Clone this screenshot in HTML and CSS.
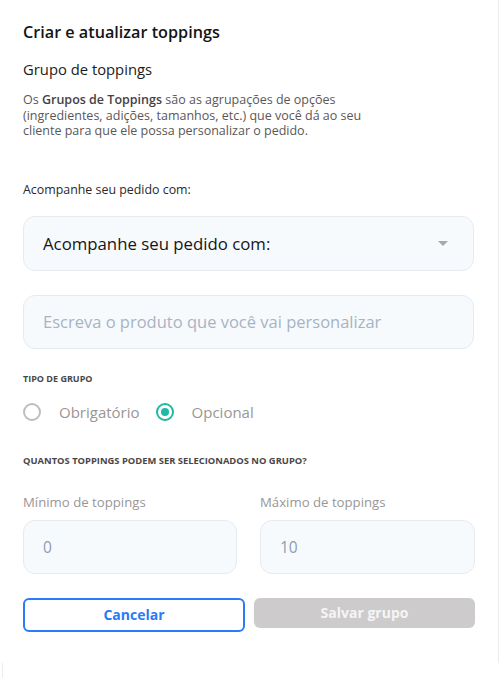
FILE: index.html
```html
<!DOCTYPE html>
<html lang="pt-BR">
<head>
    <meta charset="UTF-8">
    <meta name="viewport" content="width=device-width, initial-scale=1.0">
    <title>Criar e atualizar toppings</title>
    <link rel="stylesheet" href="styles.css">
</head>
<body>
    <div class="panel">
        <h1 class="title">Criar e atualizar toppings</h1>
        <h2 class="subtitle">Grupo de toppings</h2>
        <p class="intro">
            Os <strong>Grupos de Toppings</strong> são as agrupações de opções<br>
            (ingredientes, adições, tamanhos, etc.) que você dá ao seu<br>
            cliente para que ele possa personalizar o pedido.
        </p>

        <label class="field-label" for="accompany">Acompanhe seu pedido com:</label>
        <div class="select-box" id="accompany">
            <span>Acompanhe seu pedido com:</span>
            <span class="caret"></span>
        </div>

        <input type="text" class="input-field product-input" placeholder="Escreva o produto que você vai personalizar">

        <div class="section-label type-label">TIPO DE GRUPO</div>
        <div class="radio-row">
            <label class="radio">
                <span class="radio-dot"></span>
                <span>Obrigatório</span>
            </label>
            <label class="radio checked">
                <span class="radio-dot"></span>
                <span>Opcional</span>
            </label>
        </div>

        <div class="section-label count-label">QUANTOS TOPPINGS PODEM SER SELECIONADOS NO GRUPO?</div>
        <div class="limits-row">
            <div class="limit">
                <div class="limit-label">Mínimo de toppings</div>
                <div class="input-field limit-value">0</div>
            </div>
            <div class="limit">
                <div class="limit-label">Máximo de toppings</div>
                <div class="input-field limit-value">10</div>
            </div>
        </div>

        <div class="button-row">
            <button type="button" class="btn btn-cancel">Cancelar</button>
            <button type="button" class="btn btn-save" disabled>Salvar grupo</button>
        </div>
    </div>
    <div class="panel-tail"></div>
</body>
</html>
```

FILE: styles.css
```css
* {
    margin: 0;
    padding: 0;
    box-sizing: border-box;
    font-family: 'Open Sans', sans-serif;
}

body {
    background-color: white;
}

.panel {
    width: 499px;
    height: 663px;
    padding: 22px 24px 0 23px;
    border-right: 1px solid #ececec;
}

.panel-tail {
    height: 15px;
    margin-left: 2px;
    border-left: 1px solid #ececec;
}

.title {
    font-size: 16.2px;
    font-weight: 600;
    line-height: 20px;
    color: #141414;
}

.subtitle {
    margin-top: 17px;
    font-size: 14.8px;
    font-weight: 400;
    line-height: 20px;
    color: #1c1c1c;
}

.intro {
    margin-top: 13px;
    font-size: 12.5px;
    line-height: 15.5px;
    color: #5b5757;
}

.intro strong {
    color: #454141;
    font-weight: 600;
}

.field-label {
    display: block;
    margin-top: 43px;
    font-size: 12.4px;
    line-height: 16px;
    color: #2b2929;
}

.select-box {
    margin-top: 18px;
    height: 55px;
    padding: 0 25px 0 19px;
    display: flex;
    align-items: center;
    justify-content: space-between;
    border: 1px solid #e6ebf1;
    border-radius: 12px;
    background-color: #f7fafd;
    font-size: 16.8px;
    color: #151515;
}

.caret {
    width: 0;
    height: 0;
    border-left: 5px solid transparent;
    border-right: 5px solid transparent;
    border-top: 5px solid #a8a8a8;
}

.input-field {
    width: 100%;
    height: 54px;
    padding: 0 19px;
    border: 1px solid #e6ebf1;
    border-radius: 12px;
    background-color: #f7fafd;
    font-size: 15.5px;
    color: #8d9cb0;
    outline: none;
}

.input-field::placeholder {
    color: #a7b3c3;
}

.product-input {
    margin-top: 24px;
    font-size: 16.5px;
}

.section-label {
    font-size: 9.4px;
    font-weight: 700;
    line-height: 12px;
    color: #4a4646;
}

.type-label {
    margin-top: 24px;
    font-size: 9px;
}

.radio-row {
    margin-top: 17px;
    height: 20px;
    display: flex;
    align-items: center;
    gap: 16px;
}

.radio {
    display: flex;
    align-items: center;
    gap: 18px;
    font-size: 15px;
    color: #9a9696;
}

.radio-dot {
    width: 18px;
    height: 18px;
    border: 2px solid #bdbdbd;
    border-radius: 50%;
    display: flex;
    align-items: center;
    justify-content: center;
}

.radio.checked .radio-dot {
    border-color: #20b9a5;
}

.radio.checked .radio-dot::after {
    content: "";
    width: 8px;
    height: 8px;
    border-radius: 50%;
    background-color: #20b9a5;
}

.count-label {
    margin-top: 33px;
}

.limits-row {
    margin-top: 26px;
    display: grid;
    grid-template-columns: 214px 215px;
    gap: 23px;
}

.limit-label {
    font-size: 13.2px;
    line-height: 18px;
    color: #9a9696;
}

.limit-value {
    margin-top: 9px;
    display: flex;
    align-items: center;
}

.button-row {
    margin-top: 24px;
    display: grid;
    grid-template-columns: 222px 221px;
    gap: 9px;
    align-items: start;
}

.btn {
    border-radius: 6px;
    font-size: 14px;
    font-weight: 700;
    cursor: pointer;
}

.btn-cancel {
    height: 34px;
    border: 2px solid #2a7bf5;
    background-color: white;
    color: #2a7bf5;
}

.btn-save {
    height: 30px;
    border: none;
    background-color: #cdcbcb;
    color: #f5f5f5;
}
```
